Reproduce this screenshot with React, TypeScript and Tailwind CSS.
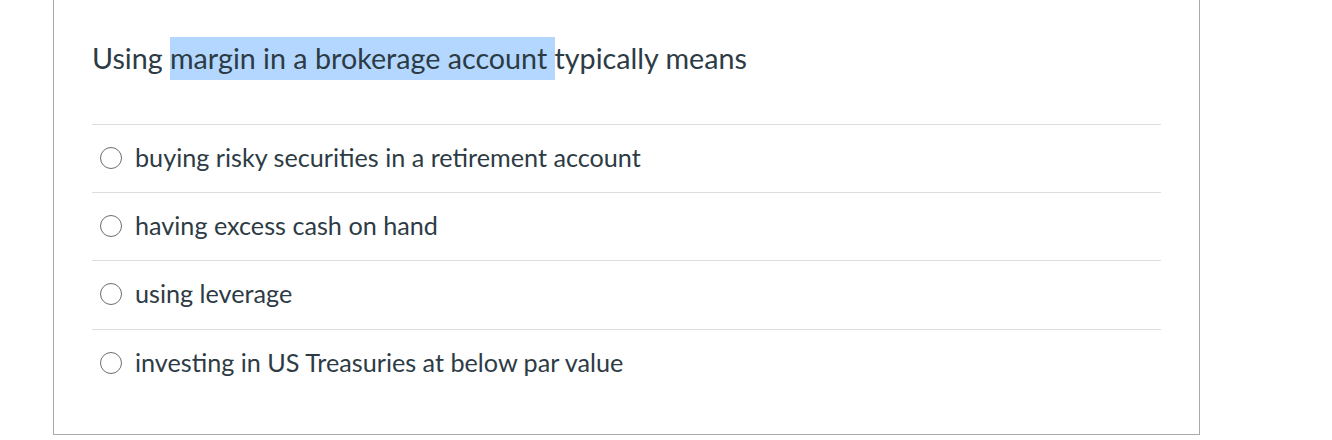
export default function App() {
  const answers = [
    'buying risky securities in a retirement account',
    'having excess cash on hand',
    'using leverage',
    'investing in US Treasuries at below par value',
  ];

  return (
    <div className="h-[440px] w-[1332px] bg-white" style={{ fontFamily: 'Lato, "Open Sans", sans-serif' }}>
      <div className="ml-[53px] w-[1147px] border-x border-b border-[#aaaaaa] px-[38px] pt-[37px] pb-[37px] text-[#2d3b45]">
        <div className="h-[43px] text-[28.7px] leading-[43px]">
          Using <span className="inline-block bg-[#b3d7fe]">margin in a brokerage account&nbsp;</span>typically means
        </div>
        <div className="mt-[44px]">
          {answers.map((a, i) => (
            <div
              key={a}
              className={`flex items-center border-t border-[#dddddd] pb-[2px] pl-[8px] ${i === 2 ? 'h-[69px]' : 'h-[68px]'}`}
            >
              <span className="block h-[22px] w-[22px] shrink-0 rounded-full border-[1.5px] border-[#6e6e6e]" />
              <span className="ml-[13px] text-[25.2px]">{a}</span>
            </div>
          ))}
        </div>
      </div>
    </div>
  );
}
